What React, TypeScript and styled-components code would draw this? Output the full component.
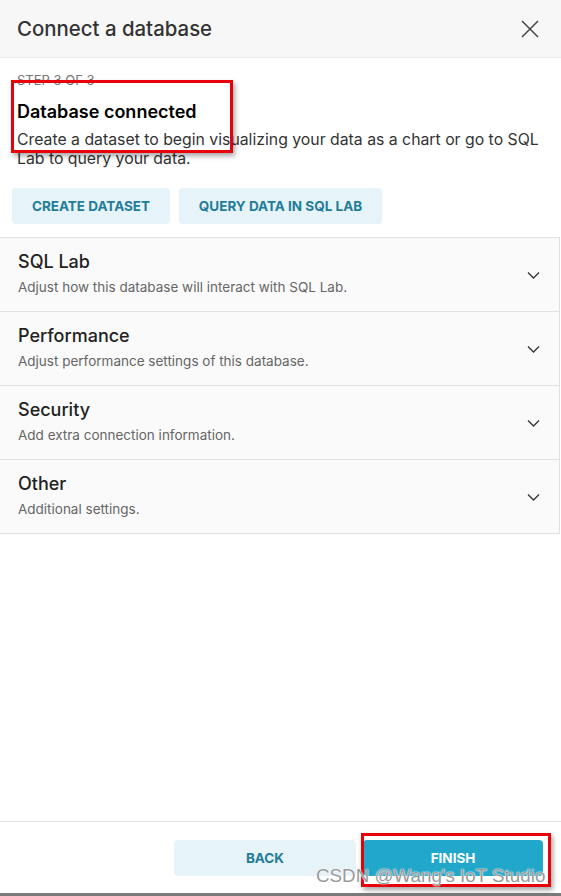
import React from "react";
import styled, { createGlobalStyle } from "styled-components";

const colors = {
  headerBg: "#f7f7f7",
  border: "#e0e0e0",
  panelBg: "#fafafa",
  text: "#222",
  muted: "#666",
  lightBtn: "#e6f3f8",
  lightBtnText: "#1f7d99",
  primary: "#20a7c9",
  annotation: "#e8000b",
};

const GlobalStyle = createGlobalStyle`
  html, body {
    margin: 0;
    padding: 0;
    background: #fff;
    font-family: Inter, "Noto Sans", sans-serif;
  }
  * { box-sizing: border-box; }
`;

const Modal = styled.div`
  position: relative;
  width: 561px;
  height: 896px;
  display: flex;
  flex-direction: column;
  background: #fff;
  border-bottom: 3px solid #7a7a7a;
`;

const Header = styled.div`
  height: 58px;
  flex: none;
  display: flex;
  align-items: center;
  justify-content: space-between;
  padding: 0 22px 0 17px;
  background: ${colors.headerBg};
  border-bottom: 1px solid #ebebeb;
`;

const Title = styled.h1`
  margin: 0;
  font-size: 20.4px;
  font-weight: 500;
  color: #333;
`;

const CloseButton = styled.button`
  border: none;
  background: none;
  padding: 0;
  width: 18px;
  height: 18px;
  display: flex;
  color: #444;
  cursor: pointer;
`;

const Body = styled.div`
  flex: 1;
  display: flex;
  flex-direction: column;
`;

const Intro = styled.div`
  padding: 14px 17px 20px;
`;

const Step = styled.div`
  font-size: 13px;
  color: #777;
  text-transform: uppercase;
  line-height: 16px;
`;

const Connected = styled.h2`
  margin: 13px 0 0;
  font-size: 18px;
  font-weight: 600;
  color: #000;
  line-height: 22px;
`;

const Description = styled.p`
  margin: 7px 0 0;
  font-size: 15.8px;
  line-height: 19px;
  color: #333;
`;

const ButtonRow = styled.div`
  display: flex;
  gap: 9px;
  padding: 0 12px 13px;
`;

const Button = styled.button<{ $primary?: boolean; $width?: number }>`
  height: 36px;
  width: ${(p) => (p.$width ? `${p.$width}px` : "auto")};
  padding: 0;
  border: none;
  border-radius: 4px;
  background: ${(p) => (p.$primary ? colors.primary : colors.lightBtn)};
  color: ${(p) => (p.$primary ? "#fff" : colors.lightBtnText)};
  font-family: Inter, sans-serif;
  font-size: 13.5px;
  font-weight: 700;
  text-transform: uppercase;
  cursor: pointer;
`;

const Panels = styled.div`
  border-top: 1px solid ${colors.border};
  border-right: 1px solid ${colors.border};
  margin-right: 1px;
`;

const Panel = styled.div`
  height: 74px;
  display: flex;
  align-items: center;
  justify-content: space-between;
  padding: 0 19px 0 18px;
  background: ${colors.panelBg};
  border-bottom: 1px solid ${colors.border};
`;

const PanelText = styled.div`
  display: flex;
  flex-direction: column;
  gap: 7px;
`;

const PanelTitle = styled.div`
  font-size: 18px;
  font-weight: 500;
  color: #222;
  line-height: 18px;
`;

const PanelDesc = styled.div`
  font-size: 13.5px;
  color: #666;
  line-height: 18px;
`;

const Footer = styled.div`
  height: 72px;
  flex: none;
  display: flex;
  justify-content: flex-end;
  align-items: flex-start;
  gap: 7px;
  padding: 18px 18px 0;
  border-top: 1px solid #e3e3e3;
`;

const Annotation = styled.div<{ $x: number; $y: number; $w: number; $h: number }>`
  position: absolute;
  left: ${(p) => p.$x}px;
  top: ${(p) => p.$y}px;
  width: ${(p) => p.$w}px;
  height: ${(p) => p.$h}px;
  border: 3px solid ${colors.annotation};
  box-shadow: 2px 3px 5px rgba(0, 0, 0, 0.35);
  pointer-events: none;
`;

const Watermark = styled.div`
  position: absolute;
  left: 316px;
  top: 865px;
  font-family: "Liberation Sans", Arial, sans-serif;
  font-size: 18.8px;
  line-height: 22px;
  color: #9a9a9a;
  text-shadow: 0 0 2px #fff, 0 0 1px #fff;
  white-space: nowrap;
  pointer-events: none;
`;

const Chevron = () => (
  <svg width="13" height="8" viewBox="0 0 13 8" fill="none">
    <path d="M1 1.5l5.5 5.5 5.5-5.5" stroke="#333" strokeWidth="1.3" />
  </svg>
);

const sections = [
  { title: "SQL Lab", desc: "Adjust how this database will interact with SQL Lab." },
  { title: "Performance", desc: "Adjust performance settings of this database." },
  { title: "Security", desc: "Add extra connection information." },
  { title: "Other", desc: "Additional settings." },
];

export default function App() {
  return (
    <>
      <GlobalStyle />
      <Modal>
        <Header>
          <Title>Connect a database</Title>
          <CloseButton aria-label="Close">
            <svg width="18" height="18" viewBox="0 0 18 18">
              <path d="M1 1l16 16M17 1L1 17" stroke="#444" strokeWidth="1.5" />
            </svg>
          </CloseButton>
        </Header>

        <Body>
          <Intro>
            <Step>Step 3 of 3</Step>
            <Connected>Database connected</Connected>
            <Description>
              Create a dataset to begin visualizing your data as a chart or go to SQL Lab to query
              your data.
            </Description>
          </Intro>

          <ButtonRow>
            <Button $width={158}>Create dataset</Button>
            <Button $width={203}>Query data in SQL Lab</Button>
          </ButtonRow>

          <Panels>
            {sections.map((s) => (
              <Panel key={s.title}>
                <PanelText>
                  <PanelTitle>{s.title}</PanelTitle>
                  <PanelDesc>{s.desc}</PanelDesc>
                </PanelText>
                <Chevron />
              </Panel>
            ))}
          </Panels>
        </Body>

        <Footer>
          <Button $width={182}>Back</Button>
          <Button $primary $width={180}>Finish</Button>
        </Footer>

        <Annotation $x={11} $y={80} $w={222} $h={73} />
        <Annotation $x={361} $y={833} $w={190} $h={54} />
        <Watermark>CSDN @Wang's IoT Studio</Watermark>
      </Modal>
    </>
  );
}
